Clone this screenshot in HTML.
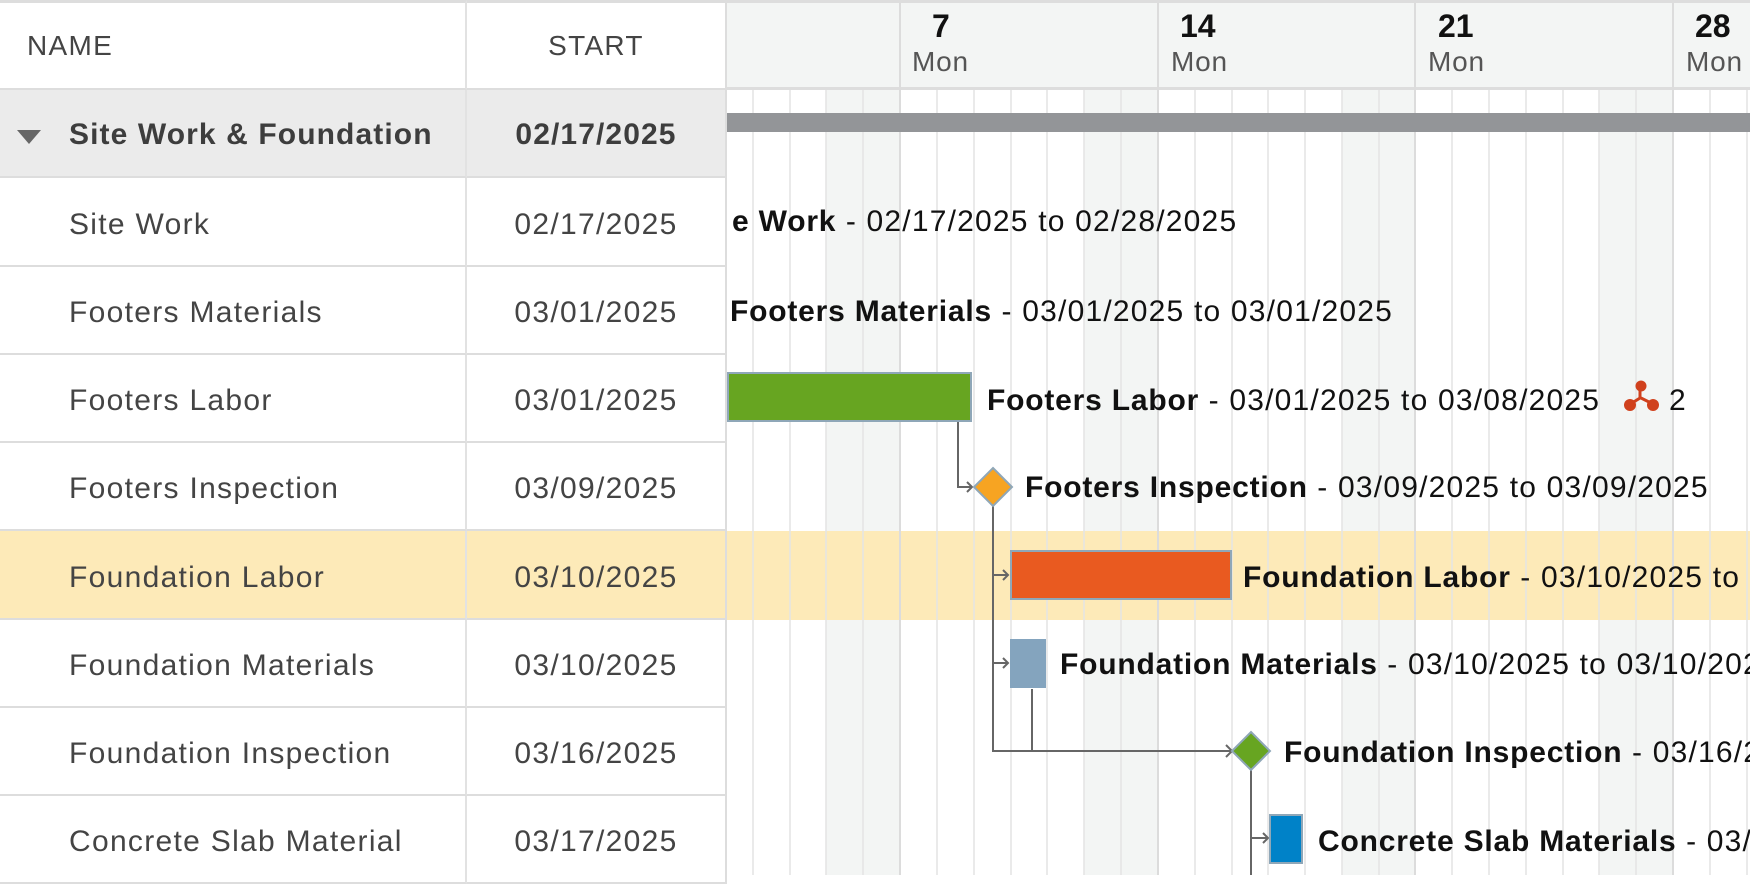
<!DOCTYPE html>
<html><head><meta charset="utf-8"><style>
*{margin:0;padding:0;box-sizing:border-box}
body{width:1750px;height:875px;overflow:hidden;background:#fff;font-family:"Liberation Sans",sans-serif;position:relative}
.c{position:absolute;display:flex;align-items:center;font-size:30px;letter-spacing:1.3px;color:#444;border-bottom:2px solid #ddd;padding-top:6px}
.n{left:0;width:467px;padding-left:69px;border-right:2px solid #e2e2e2}
.s{left:467px;width:260px;justify-content:center;border-right:2px solid #ddd}
.b{font-weight:bold;letter-spacing:1.1px;color:#3d3d3d;padding-top:4px}
</style></head><body>
<div class="c n" style="top:0;height:90px;padding-left:27px;font-size:28px;border-top:3px solid #ddd;padding-top:0">NAME</div>
<div class="c s" style="top:0;height:90px;font-size:28px;border-top:3px solid #ddd;padding-top:0">START</div>
<div class="c n b" style="top:90px;height:88px;background:#ebebeb"><span style="position:absolute;left:17px;top:40px;width:0;height:0;border-left:12px solid transparent;border-right:12px solid transparent;border-top:14px solid #666"></span>Site Work &amp; Foundation</div>
<div class="c s b" style="top:90px;height:88px;background:#ebebeb">02/17/2025</div>
<div class="c n" style="top:178px;height:89px">Site Work</div><div class="c s" style="top:178px;height:89px">02/17/2025</div>
<div class="c n" style="top:267px;height:88px">Footers Materials</div><div class="c s" style="top:267px;height:88px">03/01/2025</div>
<div class="c n" style="top:355px;height:88px">Footers Labor</div><div class="c s" style="top:355px;height:88px">03/01/2025</div>
<div class="c n" style="top:443px;height:88px">Footers Inspection</div><div class="c s" style="top:443px;height:88px">03/09/2025</div>
<div class="c n" style="top:531px;height:89px;background:#fdeab8">Foundation Labor</div><div class="c s" style="top:531px;height:89px;background:#fdeab8">03/10/2025</div>
<div class="c n" style="top:620px;height:88px">Foundation Materials</div><div class="c s" style="top:620px;height:88px">03/10/2025</div>
<div class="c n" style="top:708px;height:88px">Foundation Inspection</div><div class="c s" style="top:708px;height:88px">03/16/2025</div>
<div class="c n" style="top:796px;height:88px">Concrete Slab Material</div><div class="c s" style="top:796px;height:88px">03/17/2025</div>

<svg style="position:absolute;left:0;top:0" width="1750" height="875" font-family="Liberation Sans, sans-serif">
<rect x="727" y="0" width="1023" height="89" fill="#f3f5f4"/>
<rect x="727" y="0" width="1023" height="3" fill="#ddd"/>
<rect x="727" y="87" width="1023" height="3" fill="#ddd"/>
<g fill="#f3f5f4">
<rect x="826" y="90" width="74" height="785"/><rect x="1084" y="90" width="74" height="785"/><rect x="1342" y="90" width="73" height="785"/><rect x="1599" y="90" width="74" height="785"/>
</g>
<rect x="727" y="531" width="1023" height="89" fill="#fdeab8"/>
<g stroke="#e4e4e4" stroke-width="1.5">
<line x1="753" y1="90" x2="753" y2="875"/><line x1="790" y1="90" x2="790" y2="875"/><line x1="826" y1="90" x2="826" y2="875"/><line x1="863" y1="90" x2="863" y2="875"/>
<line x1="937" y1="90" x2="937" y2="875"/><line x1="974" y1="90" x2="974" y2="875"/><line x1="1011" y1="90" x2="1011" y2="875"/><line x1="1047" y1="90" x2="1047" y2="875"/><line x1="1084" y1="90" x2="1084" y2="875"/><line x1="1121" y1="90" x2="1121" y2="875"/>
<line x1="1195" y1="90" x2="1195" y2="875"/><line x1="1232" y1="90" x2="1232" y2="875"/><line x1="1268" y1="90" x2="1268" y2="875"/><line x1="1305" y1="90" x2="1305" y2="875"/><line x1="1342" y1="90" x2="1342" y2="875"/><line x1="1379" y1="90" x2="1379" y2="875"/>
<line x1="1452" y1="90" x2="1452" y2="875"/><line x1="1489" y1="90" x2="1489" y2="875"/><line x1="1526" y1="90" x2="1526" y2="875"/><line x1="1563" y1="90" x2="1563" y2="875"/><line x1="1599" y1="90" x2="1599" y2="875"/><line x1="1636" y1="90" x2="1636" y2="875"/>
<line x1="1710" y1="90" x2="1710" y2="875"/><line x1="1747" y1="90" x2="1747" y2="875"/>
</g>
<g stroke="#dcdcdc" stroke-width="2">
<line x1="900" y1="3" x2="900" y2="875"/><line x1="1158" y1="3" x2="1158" y2="875"/><line x1="1415" y1="3" x2="1415" y2="875"/><line x1="1673" y1="3" x2="1673" y2="875"/>
</g>
<g font-size="32" font-weight="bold" fill="#111"><text x="932" y="37">7</text><text x="1180" y="37">14</text><text x="1438" y="37">21</text><text x="1695" y="37">28</text></g>
<g font-size="28" fill="#555" letter-spacing="0.8"><text x="912" y="71">Mon</text><text x="1171" y="71">Mon</text><text x="1428" y="71">Mon</text><text x="1686" y="71">Mon</text></g>
<rect x="727" y="113" width="1023" height="19" fill="#939598"/>
<g font-size="30" fill="#111" letter-spacing="1.2">
<text x="732" y="231"><tspan font-weight="bold" letter-spacing="0.8">e Work</tspan> - 02/17/2025 to 02/28/2025</text>
<text x="730" y="321"><tspan font-weight="bold" letter-spacing="0.8">Footers Materials</tspan> - 03/01/2025 to 03/01/2025</text>
<text x="987" y="410"><tspan font-weight="bold" letter-spacing="0.8">Footers Labor</tspan> - 03/01/2025 to 03/08/2025</text>
<text x="1025" y="497"><tspan font-weight="bold" letter-spacing="0.8">Footers Inspection</tspan> - 03/09/2025 to 03/09/2025</text>
<text x="1243" y="587"><tspan font-weight="bold" letter-spacing="0.8">Foundation Labor</tspan> - 03/10/2025 to 03/17/2025</text>
<text x="1060" y="674"><tspan font-weight="bold" letter-spacing="0.8">Foundation Materials</tspan> - 03/10/2025 to 03/10/2025</text>
<text x="1284" y="762"><tspan font-weight="bold" letter-spacing="0.8">Foundation Inspection</tspan> - 03/16/2025 to 03/16/2025</text>
<text x="1318" y="851"><tspan font-weight="bold" letter-spacing="0.8">Concrete Slab Materials</tspan> - 03/17/2025 to 03/17/2025</text>
<text x="1669" y="410">2</text>
</g>
<g fill="#d0411d"><circle cx="1641" cy="386" r="5.5"/><circle cx="1630" cy="405" r="6"/><circle cx="1653" cy="405" r="6"/><path d="M1640 390v8l-8 5M1641 398l10 5" stroke="#d0411d" stroke-width="3" fill="none"/></g>
<g stroke="#666" stroke-width="2" fill="none">
<path d="M958 422V487H972M967 482l5 5-5 5"/>
<path d="M993 506V751H1232M1226 745l6 6-6 6"/>
<path d="M993 575H1008M1003 570l5 5-5 5"/>
<path d="M993 663H1008M1003 658l5 5-5 5"/>
<path d="M1032 689V751"/>
<path d="M1251 770V875M1251 838H1268M1263 833l5 5-5 5"/>
</g>
<rect x="728" y="373" width="243" height="48" fill="#67a521" stroke="#8fa7b8" stroke-width="2"/>
<rect x="1011" y="551" width="220" height="48" fill="#e95a20" stroke="#8fa7b8" stroke-width="2"/>
<rect x="1010" y="639" width="36" height="49" fill="#84a4be"/>
<rect x="1270" y="815" width="32" height="48" fill="#0082c8" stroke="#8fa7b8" stroke-width="2"/>
<path d="M993 468L1012 487L993 506L974 487Z" fill="#f7a422" stroke="#8fa7b8" stroke-width="2"/>
<path d="M1251 732L1270 751L1251 770L1232 751Z" fill="#67a521" stroke="#8fa7b8" stroke-width="2"/>
</svg>
</body></html>
